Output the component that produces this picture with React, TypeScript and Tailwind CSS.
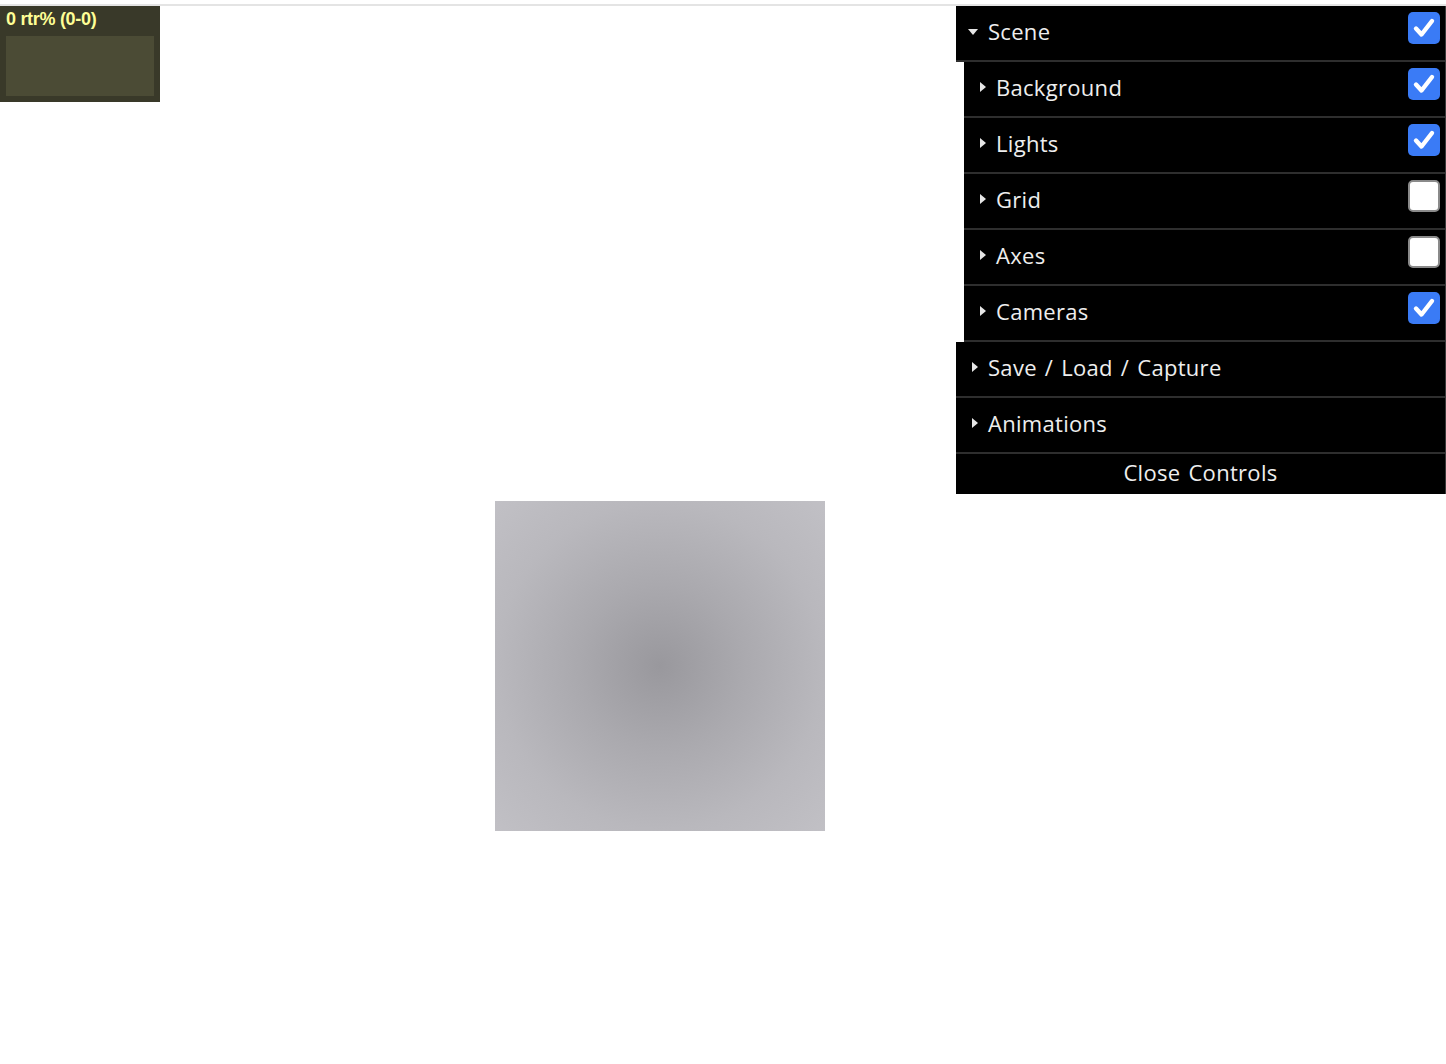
import React from 'react';

interface FolderRow {
    label: string;
    checked?: boolean;
    nested?: boolean;
}

const ROWS: FolderRow[] = [
    { label: 'Background', checked: true, nested: true },
    { label: 'Lights', checked: true, nested: true },
    { label: 'Grid', checked: false, nested: true },
    { label: 'Axes', checked: false, nested: true },
    { label: 'Cameras', checked: true, nested: true },
    { label: 'Save / Load / Capture' },
    { label: 'Animations' },
];

const FONT = { fontFamily: '"Open Sans", "Noto Sans", sans-serif' };

function Checkbox({ checked }: { checked: boolean }) {
    // sits a bit above the row centre, like the native one
    if (!checked) {
        return <div className="self-start mt-[6px] w-8 h-8 rounded-[5px] bg-white border-2 border-[#8a8a8a]" />;
    }
    return (
        <div className="self-start mt-[6px] w-8 h-8 rounded-[5px] bg-[#3a7bf6] flex items-center justify-center">
            <svg width="24" height="24" viewBox="0 0 24 24">
                <polyline points="4,12.5 9.5,18.5 20,5" fill="none" stroke="#fff" strokeWidth="4.4" strokeLinecap="round" strokeLinejoin="round" />
            </svg>
        </div>
    );
}

function Caret({ open }: { open?: boolean }) {
    if (open) {
        return (
            <svg width="10" height="6" viewBox="0 0 10 6" className="shrink-0 -mt-[3px]">
                <polygon points="0,0 10,0 5,6" fill="#e6e6e6" />
            </svg>
        );
    }
    return (
        <svg width="6" height="10" viewBox="0 0 6 10" className="shrink-0 -mt-[4px]">
            <polygon points="0,0 6,5 0,10" fill="#e6e6e6" />
        </svg>
    );
}

function Row({ row }: { row: FolderRow }) {
    return (
        <div className={row.nested ? 'pl-2 bg-white' : ''}>
            <div className="h-14 bg-black border-b-2 border-[#2e2e2e] flex items-center pl-4 pr-[5px]">
                <Caret />
                <span className="ml-[10px] -mt-[3px] text-[22px] text-[#eeeeee] tracking-[0.3px] [word-spacing:2px]">{row.label}</span>
                <div className="flex-1" />
                {row.checked !== undefined && <Checkbox checked={row.checked} />}
            </div>
        </div>
    );
}

export default function App() {
    return (
        <div className="relative w-full h-[1064px] bg-white overflow-hidden" style={FONT}>
            <div className="h-[4px]" />
            <div className="h-[2px] bg-[#e4e4e4]" />

            {/* canvas content */}
            <div className="pt-[495px] pl-[495px]">
                <div className="w-[330px] h-[330px] bg-[radial-gradient(circle_at_center,#99989d_0%,#aaa9ae_35%,#b9b8bd_70%,#c1c0c5_100%)]" />
            </div>

            {/* stats panel */}
            <div className="absolute left-0 top-[6px] w-[160px] h-[96px] bg-[#393929] px-[6px] pt-[2px]">
                <div className="text-[18px] font-bold text-[#fefe96] leading-[22px] tracking-[-0.3px]" style={{ fontFamily: '"Liberation Sans", Arial, sans-serif' }}>
                    0 rtr% (0-0)
                </div>
                <div className="mt-[6px] h-[60px] bg-[#4b4b35]" />
            </div>

            {/* controls */}
            <div className="absolute left-[956px] top-[6px] w-[490px] border-r border-[#3a3a3a]">
                <div className="h-14 bg-black border-b-2 border-[#2e2e2e] flex items-center pl-3 pr-[5px]">
                    <Caret open />
                    <span className="ml-[10px] -mt-[3px] text-[22px] text-[#eeeeee] tracking-[0.3px]">Scene</span>
                    <div className="flex-1" />
                    <Checkbox checked />
                </div>
                {ROWS.map((r) => (
                    <Row key={r.label} row={r} />
                ))}
                <div className="h-10 bg-black flex items-center justify-center pb-[4px] text-[22px] text-[#eeeeee] tracking-[0.3px] [word-spacing:2px]">
                    Close Controls
                </div>
            </div>
        </div>
    );
}
